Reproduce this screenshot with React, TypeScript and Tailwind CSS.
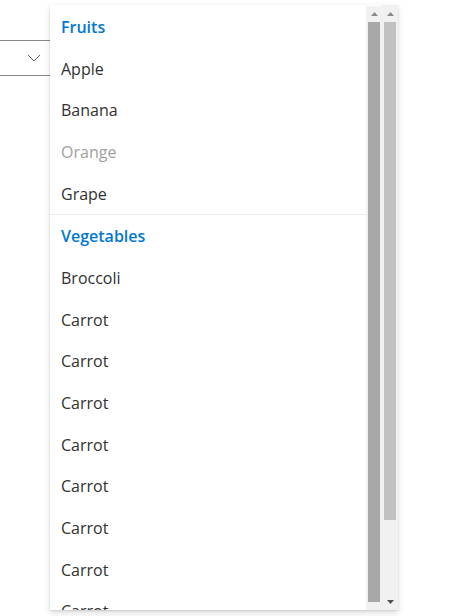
import React from "react";

type Row =
  | { kind: "header"; text: string }
  | { kind: "item"; text: string; disabled?: boolean }
  | { kind: "divider" };

const rows: Row[] = [
  { kind: "header", text: "Fruits" },
  { kind: "item", text: "Apple" },
  { kind: "item", text: "Banana" },
  { kind: "item", text: "Orange", disabled: true },
  { kind: "item", text: "Grape" },
  { kind: "divider" },
  { kind: "header", text: "Vegetables" },
  { kind: "item", text: "Broccoli" },
  { kind: "item", text: "Carrot" },
  { kind: "item", text: "Carrot" },
  { kind: "item", text: "Carrot" },
  { kind: "item", text: "Carrot" },
  { kind: "item", text: "Carrot" },
  { kind: "item", text: "Carrot" },
  { kind: "item", text: "Carrot" },
  { kind: "item", text: "Carrot" },
  { kind: "item", text: "Carrot" },
];

const UpArrow = () => (
  <svg width="7" height="4" viewBox="0 0 7 4">
    <path d="M3.5 0 L7 4 L0 4 Z" fill="#8a8a8a" />
  </svg>
);

const DownArrow = () => (
  <svg width="7" height="4" viewBox="0 0 7 4">
    <path d="M0 0 L7 0 L3.5 4 Z" fill="#505050" />
  </svg>
);

const ListRow = ({ row }: { row: Row }) => {
  if (row.kind === "divider") {
    return <div className="h-px shrink-0 bg-[#edebe9]" />;
  }
  if (row.kind === "header") {
    return (
      <div className="flex h-[41.7px] shrink-0 items-center pl-[11px] text-[16px] font-semibold text-[#0078d4]">
        {row.text}
      </div>
    );
  }
  return (
    <div
      className={`flex h-[41.7px] shrink-0 items-center pl-[11px] text-[16px] ${
        row.disabled ? "text-[#a19f9d]" : "text-[#323130]"
      }`}
    >
      {row.text}
    </div>
  );
};

export default function App() {
  return (
    <div
      className="relative h-[616px] w-[474px] overflow-hidden bg-white"
      style={{ fontFamily: '"Segoe UI", "Open Sans", sans-serif' }}
    >
      {/* combo box, mostly off screen */}
      <div className="ml-[-20px] mt-[40px] flex h-[36px] w-[71px] items-center justify-end border border-[#8a8886] bg-white pr-[9px]">
        <svg width="14" height="8" viewBox="0 0 14 8" fill="none">
          <path d="M1 1 L7 7 L13 1" stroke="#605e5c" strokeWidth="1" />
        </svg>
      </div>

      {/* dropdown callout */}
      <div className="absolute left-[50px] top-[5px] flex h-[605px] w-[348px] bg-white shadow-[0_3.2px_7.2px_rgba(0,0,0,0.13),0_0.6px_1.8px_rgba(0,0,0,0.11)]">
        <div className="flex min-w-0 flex-1 pt-px">
          <div className="flex min-w-0 flex-1 flex-col overflow-hidden">
            {rows.map((r, i) => (
              <ListRow key={i} row={r} />
            ))}
          </div>
          {/* inner scrollbar */}
          <div className="flex w-[16px] flex-col bg-[#f1f1f1] px-[2px]">
            <div className="flex h-[16px] items-center justify-center">
              <UpArrow />
            </div>
            <div className="mb-[8px] flex-1 bg-[#a8a8a8]" />
          </div>
        </div>
        {/* outer scrollbar */}
        <div className="flex w-[16px] flex-col bg-[#f1f1f1] px-[2px]">
          <div className="flex h-[17px] items-center justify-center">
            <UpArrow />
          </div>
          <div className="h-[498px] bg-[#c1c1c1]" />
          <div className="flex-1" />
          <div className="flex h-[16px] items-center justify-center">
            <DownArrow />
          </div>
        </div>
      </div>
    </div>
  );
}
